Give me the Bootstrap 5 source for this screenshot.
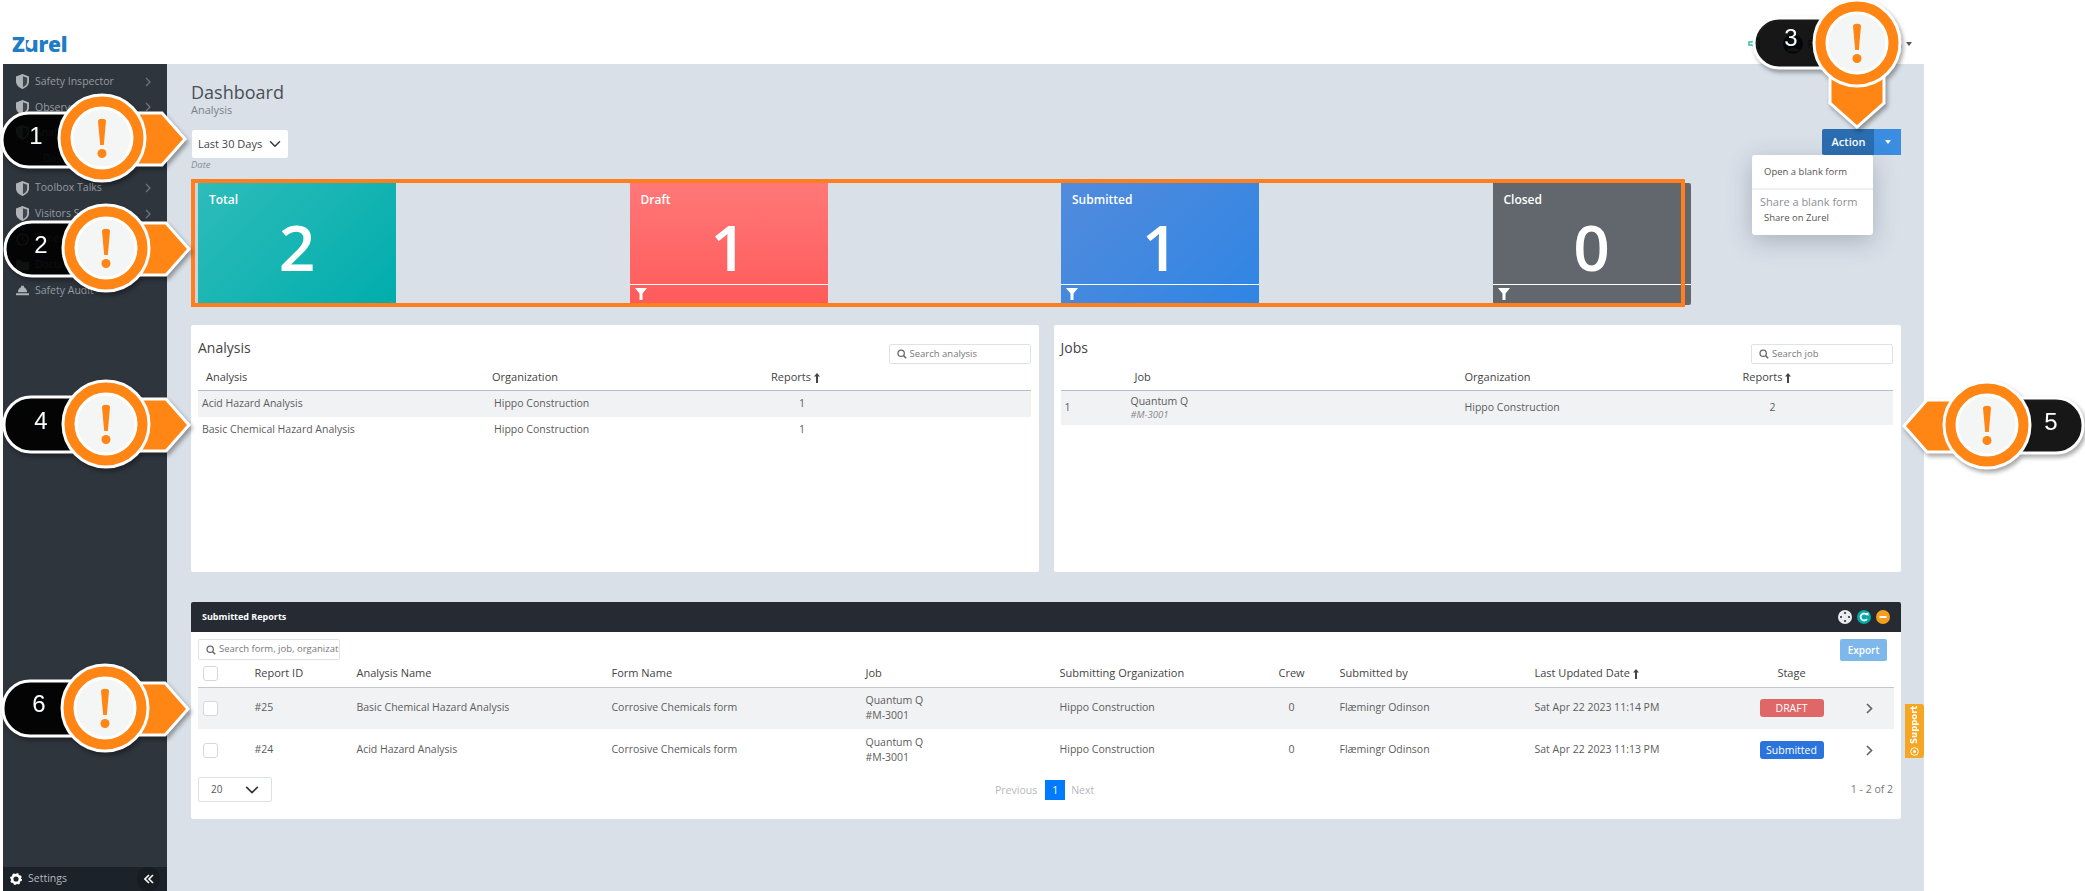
<!DOCTYPE html>
<html lang="en">
<head>
  <meta charset="UTF-8" />
  <title>Dashboard | Zurel</title>
  <link href="https://cdn.jsdelivr.net/npm/bootstrap@5.3.0/dist/css/bootstrap.min.css" rel="stylesheet"/>
  <script src="https://cdn.jsdelivr.net/npm/bootstrap@5.3.0/dist/js/bootstrap.bundle.min.js"></script>
  <style>
    html, body { height: 891px; overflow: hidden; }
    body { background: #fff; color: #555; font-family: "Open Sans", "Liberation Sans", sans-serif; font-size: 10.5px; position: relative; }
    .top-bar { height: 64px; width: 1924px; padding: 0 12px 0 12px; }
    .logo { color: #1f7dc4; font-size: 21px; font-weight: 800; letter-spacing: -.25px; line-height: 24px; margin-top: 32px; height: 24px; position: relative; }
    .logo svg { position: absolute; left: 15px; top: 7px; }
    .user-name { color: #555; font-size: 11px; margin-left: 5px; }
    .caret { border-top: 4px solid #555; border-left: 3.5px solid transparent; border-right: 3.5px solid transparent; margin-left: 4px; }
    .caret-white { border-top-color: #fff; margin: 0; }
    .avatar { margin-left: 21px; }
    .frame { margin-left: 3px; width: 1921px; height: 827px; background: #d9e0e8; position: relative; }
    .side { width: 164px; flex: none; background: #2e353d; padding-top: 5px; }
    .side .nav-link { color: #959ba1; font-size: 10.5px; height: 25.6px; padding: 0 0 0 13px; white-space: nowrap; }
    .side .nav-link svg.ic { width: 13px; height: 15px; margin-right: 6px; flex: none; }
    .side .nav-link .chev { margin-left: auto; margin-right: 16px; color: #6f757c; }
    .side .sub-link { padding-left: 40px; margin-bottom: 4px; }
    .side-foot { height: 24px; background: #1b2229; color: #b4b9be; font-size: 10.5px; padding-left: 7px; }
    .side-foot .gear { margin-right: 6px; }
    .side-foot .collapse-btn { width: 23px; height: 24px; background: #161c22; border-radius: 12px; margin-right: 7px; }
    .main { padding: 17px 23px 0 24px; min-width: 0; }
    .page-title { color: #4a4f55; font-size: 18px; font-weight: 400; line-height: 22px; margin: 0; }
    .page-sub { color: #7b8087; font-size: 11px; line-height: 14px; }
    .head-row { margin-top: 13px; }
    .range { width: 96px; height: 28px; margin-left: 1px; font-size: 11px; color: #444; padding: 0 0 0 6px; border: 0; border-radius: 2px; background-position: right 5px center; background-size: 16px 12px; }
    .hint { color: #8a8f96; font-size: 9.5px; font-style: italic; line-height: 14px; }
    .act { margin-top: -1px; }
    .act .btn { border: 0; border-radius: 2px; font-size: 11px; font-weight: 600; height: 26px; padding: 0; }
    .act .btn-main { width: 53px; background: #2a6db0; }
    .act .btn-more { width: 27px; background: #3a8de0; }
    .act .dropdown-menu { left: auto; right: 28px; top: 100%; width: 121px; min-width: 0; padding: 0; height: 80px; border: 0; border-radius: 3px; box-shadow: 0 6px 24px rgba(60, 70, 90, .3); }
    .act .dropdown-item { color: #555; font-size: 9.5px; padding: 0 12px; line-height: 16px; background: none; }
    .act .first-item { margin-top: 9px; }
    .act .dropdown-divider { border-top: 2px solid #eef0f2; margin: 8px 0 0; }
    .act .dropdown-header { color: #8a9099; font-size: 11px; padding: 4px 8px 0; line-height: 16px; }
    .kpis { margin: 11px 0 0 7px; height: 122px; position: relative; }
    .kpi-col { flex: 0 0 431.500px; }
    .kpi { width: 198px; height: 122px; border: 0; border-radius: 0; color: #fff; overflow: hidden; }
    .kpi-label { font-size: 12px; font-weight: 600; line-height: 16px; padding: 9px 0 0 11px; }
    .kpi-num { font-size: 64px; font-weight: 600; line-height: 70px; text-align: center; margin-top: 4px; height: 72px; }
    .kpi-foot { border-top: 1px solid #fff; height: 21px; padding: 3px 0 0 5px; }
    .kpi-total { background: linear-gradient(135deg, #2dbcba, #00adac); box-shadow: -3px 0 0 #cdd3d6; overflow: visible; }
    .kpi-draft { background: linear-gradient(180deg, #ff7878, #ff5a5a); }
    .kpi-sub { background: linear-gradient(135deg, #528bdc, #2f85e4); }
    .kpi-closed { background: #62676e; border-radius: 0 2px 2px 0; }
    .kpi-mark { position: absolute; left: -7px; top: -4px; width: 1494px; height: 128px; border: 4px solid #ff7f1e; pointer-events: none; }
    .panels { --bs-gutter-x: 15px; margin-top: 20px; }
    .panel { height: 247px; border: 0; border-radius: 2px; padding: 13px 8px 0 7px; }
    .panel-top { height: 26px; }
    .panel-title { color: #444; font-size: 14px; font-weight: 400; line-height: 20px; margin: 0; }
    .search { width: 142px; height: 20px; background: #fff; border: 1px solid #dfe3e7; border-radius: 2px; padding-left: 7px; }
    .search-tall { height: 21px; }
    .search svg { flex: none; }
    .search input { border: 0; outline: 0; width: 100%; min-width: 0; padding: 0 0 0 3px; font-size: 9.5px; color: #555; background: none; font-family: inherit; }
    .search input::placeholder { color: #777; opacity: 1; }
    .table.grid { table-layout: fixed; width: 100%; margin: 0; font-size: 10.5px; color: #5c5c5c; --bs-table-bg: transparent; --bs-table-color: #5c5c5c; }
    .table.grid > * > * > * { padding: 0; border: 0; vertical-align: middle; }
    .table.grid th { color: #444; font-weight: 400; font-size: 11px; }
    .table.grid thead th { height: 26px; border-bottom: 1px solid #b4bcc6; }
    .table.grid .odd > * { background: #f1f2f4; }
    .table.grid .org-cell { padding-left: 6px; }
    .grid-a col:nth-child(1) { width: 290px; }
    .grid-a col:nth-child(2) { width: 279px; }
    .grid-j col:nth-child(1) { width: 70px; }
    .grid-j col:nth-child(2) { width: 334px; }
    .grid-j col:nth-child(3) { width: 278px; }
    .grid-r col:nth-child(1) { width: 56.500px; }
    .grid-r col:nth-child(2) { width: 102px; }
    .grid-r col:nth-child(3) { width: 255px; }
    .grid-r col:nth-child(4) { width: 254px; }
    .grid-r col:nth-child(5) { width: 194px; }
    .grid-r col:nth-child(6) { width: 219px; }
    .grid-r col:nth-child(7) { width: 61px; }
    .grid-r col:nth-child(8) { width: 195px; }
    .grid-r col:nth-child(9) { width: 225px; }
    .grid-r col:nth-child(10) { width: 64px; }
    .table.grid-a tbody td { height: 26.500px; }
    .table.grid-j tbody td { height: 35px; }
    .num-a { padding-left: 32px; }
    .num-j { padding-left: 27px; }
    .job-no { color: #888; font-size: 9.5px; font-style: italic; line-height: 12px; }
    .job-line { line-height: 15px; }
    .reports { height: 217px; margin-top: 30px; border: 0; border-radius: 2px; }
    .reports .card-header { height: 30px; background: #262b33; color: #fff; font-size: 9px; font-weight: 700; border: 0; border-radius: 2px 2px 0 0; padding: 0 11px; }
    .dot { width: 14px; height: 14px; border-radius: 50%; margin-left: 5px; }
    .dot-move { background: #e9ebee; }
    .dot-refresh { background: #03a9a5; }
    .dot-min { background: #f59d1c; }
    .reports .card-body { padding: 7px 7px 0; }
    .tools { height: 21px; }
    .btn-export { width: 47px; height: 22px; margin-right: 7px; padding: 0; border: 0; border-radius: 2px; background: #7db7ec; color: #fff; font-size: 10px; font-weight: 600; }
    .table.grid-r thead th { height: 27px; border-bottom-color: #c4c8cd; }
    .table.grid-r tbody td { height: 42px; }
    .grid-r .form-check-input { width: 15px; height: 15px; margin: 0 0 0 5px; border-color: #d5d8dc; border-radius: 3px; display: block; }
    .table.grid-r .crew { text-align: center; padding-right: 35px; }
    .table.grid-r .go { padding-left: 42px; color: #666; }
    .stage { width: 64px; height: 18px; line-height: 18px; padding: 0; font-size: 10.5px; font-weight: 400; border-radius: 3px; display: block; }
    .stage-draft { background: #e06767; }
    .stage-sub { background: #2a74dc; }
    .pager-row { margin-top: 6px; }
    .per-page { width: 74px; height: 25px; font-size: 10px; color: #555; padding: 0 0 0 12px; border-color: #dde0e4; border-radius: 2px; background-position: right 10px center; background-size: 18px 14px; }
    .pager { margin: 0 0 0 723px; gap: 0; }
    .pager .page-link { border: 0; background: none; color: #b5b9be; font-size: 10.5px; padding: 0; line-height: 20px; }
    .pager .page-item.active .page-link { background: #007bff; color: #fff; width: 20px; text-align: center; margin: 0 7px 0 8px; }
    .count { color: #777; margin-left: auto; margin-right: 1px; }
    .support { position: absolute; right: 0; top: 640px; width: 19px; height: 54px; background: #f5a623; color: #fff; font-family: "DejaVu Sans", sans-serif; font-size: 8.500px; font-weight: 700; gap: 3px; border-radius: 3px 0 0 3px; writing-mode: vertical-rl; transform: rotate(180deg); }
    .overlay { position: absolute; left: 0; top: 0; z-index: 5; pointer-events: none; }
    .callout { filter: drop-shadow(2px 3px 2px rgba(0, 0, 0, .35)); }
    .callout text { fill: #fff; font-family: "Liberation Sans", sans-serif; font-size: 24px; text-anchor: middle; }
  </style>
</head>
<body>
  <svg width="0" height="0" class="position-absolute">
    <defs>
      <symbol id="shield" viewBox="0 0 14 16"><path d="M7 0 14 2.500V8c0 4-3.500 6.800-7 8-3.500-1.200-7-4-7-8V2.500Z" fill="#aeb3b7"/><path d="M7.500 2.300 12 3.900V8c0 2.900-2.200 5-4.500 6Z" fill="#3f464e"/></symbol>
      <symbol id="funnel" viewBox="0 0 12 12"><path d="M0 0h12L7.500 5.500V12h-3V5.500Z" fill="#fff"/></symbol>
      <symbol id="lens" viewBox="0 0 12 12"><circle cx="5" cy="5" r="3.800" fill="none" stroke="#666" stroke-width="1.500"/><path d="M8 8l3 3.200" stroke="#666" stroke-width="1.800"/></symbol>
      <symbol id="sortup" viewBox="0 0 6 10"><path d="M3 0 6 3.500H4V10H2V3.500H0Z" fill="#444"/></symbol>
      <symbol id="chev" viewBox="0 0 6 10"><path d="M1 1l4 4-4 4" fill="none" stroke="currentColor" stroke-width="1.300"/></symbol>
      <symbol id="chev-b" viewBox="0 0 7 11"><path d="M1 1l4.500 4.500L1 10" fill="none" stroke="currentColor" stroke-width="1.700"/></symbol>
      <symbol id="mark" viewBox="-9 -20 18 42"><path d="M-4-17C-4-20 4-20 4-17L1.800 7H-1.800Z" fill="#ff8515"/><circle cx="0" cy="15.500" r="4.500" fill="#ff8515"/></symbol>
      <g id="head">
        <circle r="43" fill="#ff8515" stroke="#fff" stroke-width="3"/>
        <circle r="30" fill="#f4f5f5" stroke="#fff" stroke-width="3"/>
        <use href="#mark" x="-9" y="-20" width="18" height="42"/>
      </g>
      <g id="beak-right"><path d="M0-25H60L83 1 60 27H0Z" fill="#ff8515" stroke="#fff" stroke-width="3"/></g>
    </defs>
  </svg>

  <header class="top-bar d-flex justify-content-between">
    <div class="logo">Z<span>u</span>rel<svg width="6" height="9" viewBox="0 0 6 9"><path d="M3 0C5 3 6 4 6 6A3 3 0 0 1 0 6C0 4 1 3 3 0Z" fill="#fff"/></svg></div>
    <div class="d-flex align-items-center mt-4">
      <svg width="14" height="14" viewBox="0 0 14 14"><path d="M1 5h3l7-4v11L4 8H1Z" fill="none" stroke="#35bdb7" stroke-width="1.500"/></svg>
      <svg class="avatar" width="20" height="20" viewBox="0 0 28 28"><circle cx="14" cy="14" r="14" fill="#1d5c5a"/><circle cx="14" cy="11" r="5" fill="#cfd6d9"/><path d="M5 24c2-6 16-6 18 0" fill="#cfd6d9"/></svg>
      <span class="user-name">Flæmingr Odinson</span>
      <span class="caret"></span>
    </div>
  </header>

  <div class="frame d-flex">
    <aside class="side d-flex flex-column">
      <nav class="nav flex-column">
        <a class="nav-link d-flex align-items-center" href="#"><svg class="ic"><use href="#shield"/></svg>Safety Inspector<svg class="chev" width="6" height="10"><use href="#chev"/></svg></a>
        <a class="nav-link d-flex align-items-center" href="#"><svg class="ic"><use href="#shield"/></svg>Observations<svg class="chev" width="6" height="10"><use href="#chev"/></svg></a>
        <a class="nav-link d-flex align-items-center" href="#"><svg class="ic"><use href="#shield"/></svg>Analysis</a>
        <a class="nav-link sub-link d-flex align-items-center" href="#">Dashboard</a>
        <a class="nav-link d-flex align-items-center" href="#"><svg class="ic"><use href="#shield"/></svg>Toolbox Talks<svg class="chev" width="6" height="10"><use href="#chev"/></svg></a>
        <a class="nav-link d-flex align-items-center" href="#"><svg class="ic"><use href="#shield"/></svg>Visitors Safety<svg class="chev" width="6" height="10"><use href="#chev"/></svg></a>
        <a class="nav-link d-flex align-items-center" href="#"><svg class="ic" viewBox="0 0 14 14"><circle cx="7" cy="7" r="6" fill="none" stroke="#aeb3b7" stroke-width="1.500"/><path d="M7 3v4l3 2" fill="none" stroke="#aeb3b7"/></svg>Timesheets</a>
        <a class="nav-link d-flex align-items-center" href="#"><svg class="ic" viewBox="0 0 14 14"><path d="M0 2h5l2 2h7v9H0Z" fill="#aeb3b7"/></svg>Documents</a>
        <a class="nav-link d-flex align-items-center" href="#"><svg class="ic" viewBox="0 0 14 14"><path d="M0 10h14v2H0ZM2 9c0-3 2-5 3.500-5.500V2h3v1.500C10 4 12 6 12 9Z" fill="#aeb3b7"/></svg>Safety Audit</a>
      </nav>
      <div class="side-foot mt-auto d-flex align-items-center">
        <svg class="gear" width="12" height="12" viewBox="0 0 14 14"><circle cx="7" cy="7" r="4.500" fill="none" stroke="#fff" stroke-width="3"/><circle cx="7" cy="7" r="6" fill="none" stroke="#fff" stroke-width="2" stroke-dasharray="2.300 2.400"/></svg>
        Settings
        <span class="collapse-btn ms-auto d-flex align-items-center justify-content-center">
          <svg width="10" height="10" viewBox="0 0 10 10"><path d="M5 1 1 5l4 4M9 1 5 5l4 4" fill="none" stroke="#fff" stroke-width="1.600"/></svg>
        </span>
      </div>
    </aside>

    <main class="main flex-grow-1">
      <h1 class="page-title">Dashboard</h1>
      <div class="page-sub">Analysis</div>

      <div class="head-row d-flex justify-content-between">
        <div>
          <select class="form-select range"><option>Last 30 Days</option></select>
          <div class="hint">Date</div>
        </div>
        <div class="btn-group act align-self-start">
          <button type="button" class="btn btn-primary btn-main">Action</button>
          <button type="button" class="btn btn-primary btn-more d-flex align-items-center justify-content-center"><span class="caret caret-white"></span></button>
          <div class="dropdown-menu show">
            <a class="dropdown-item first-item" href="#">Open a blank form</a>
            <div class="dropdown-divider"></div>
            <div class="dropdown-header">Share a blank form</div>
            <a class="dropdown-item" href="#">Share on Zurel</a>
          </div>
        </div>
      </div>

      <div class="kpis d-flex">
        <div class="kpi-col">
          <div class="card kpi kpi-total">
            <div class="kpi-label">Total</div>
            <div class="kpi-num">2</div>
          </div>
        </div>
        <div class="kpi-col">
          <div class="card kpi kpi-draft">
            <div class="kpi-label">Draft</div>
            <div class="kpi-num">1</div>
            <div class="kpi-foot d-flex"><svg width="12" height="12"><use href="#funnel"/></svg></div>
          </div>
        </div>
        <div class="kpi-col">
          <div class="card kpi kpi-sub">
            <div class="kpi-label">Submitted</div>
            <div class="kpi-num">1</div>
            <div class="kpi-foot d-flex"><svg width="12" height="12"><use href="#funnel"/></svg></div>
          </div>
        </div>
        <div>
          <div class="card kpi kpi-closed">
            <div class="kpi-label">Closed</div>
            <div class="kpi-num">0</div>
            <div class="kpi-foot d-flex"><svg width="12" height="12"><use href="#funnel"/></svg></div>
          </div>
        </div>
        <div class="kpi-mark"></div>
      </div>

      <div class="row panels">
        <div class="col-6">
          <div class="card panel">
            <div class="panel-top d-flex justify-content-between">
              <h2 class="panel-title">Analysis</h2>
              <div class="search d-flex align-items-center align-self-end"><svg width="10" height="10"><use href="#lens"/></svg><input type="text" placeholder="Search analysis"></div>
            </div>
            <table class="table grid grid-a">
              <colgroup><col><col><col></colgroup>
              <thead><tr><th class="ps-2">Analysis</th><th class="ps-1">Organization</th><th class="ps-1">Reports <svg width="6" height="10"><use href="#sortup"/></svg></th></tr></thead>
              <tbody>
                <tr class="odd"><td class="ps-1">Acid Hazard Analysis</td><td class="org-cell">Hippo Construction</td><td><span class="d-block num-a">1</span></td></tr>
                <tr><td class="ps-1">Basic Chemical Hazard Analysis</td><td class="org-cell">Hippo Construction</td><td><span class="d-block num-a">1</span></td></tr>
              </tbody>
            </table>
          </div>
        </div>
        <div class="col-6">
          <div class="card panel">
            <div class="panel-top d-flex justify-content-between">
              <h2 class="panel-title">Jobs</h2>
              <div class="search d-flex align-items-center align-self-end"><svg width="10" height="10"><use href="#lens"/></svg><input type="text" placeholder="Search job"></div>
            </div>
            <table class="table grid grid-j">
              <colgroup><col><col><col><col></colgroup>
              <thead><tr><th></th><th class="ps-1">Job</th><th>Organization</th><th>Reports <svg width="6" height="10"><use href="#sortup"/></svg></th></tr></thead>
              <tbody>
                <tr class="odd"><td class="ps-1">1</td><td><div class="job-line">Quantum Q</div><div class="job-no">#M-3001</div></td><td>Hippo Construction</td><td><span class="d-block num-j">2</span></td></tr>
              </tbody>
            </table>
          </div>
        </div>
      </div>

      <div class="card reports">
        <div class="card-header d-flex align-items-center justify-content-between">
          <span>Submitted Reports</span>
          <span class="d-flex">
            <span class="dot dot-move d-flex"><svg width="14" height="14" viewBox="0 0 14 14"><path d="M7 2v10M2 7h10" stroke="#555" stroke-width="2" stroke-dasharray="2 6" fill="none"/></svg></span>
            <span class="dot dot-refresh d-flex"><svg width="14" height="14" viewBox="0 0 14 14"><path d="M10 5A3.500 3.500 0 1 0 10 9" fill="none" stroke="#fff" stroke-width="1.800"/><path d="M8 3.500l3.500-1V6Z" fill="#fff"/></svg></span>
            <span class="dot dot-min d-flex"><svg width="14" height="14" viewBox="0 0 14 14"><path d="M3.500 7h7" stroke="#fff" stroke-width="2"/></svg></span>
          </span>
        </div>
        <div class="card-body">
          <div class="tools d-flex justify-content-between">
            <div class="search search-tall d-flex align-items-center"><svg width="10" height="10"><use href="#lens"/></svg><input type="text" placeholder="Search form, job, organization"></div>
            <button type="button" class="btn btn-export">Export</button>
          </div>
          <table class="table grid grid-r">
            <colgroup><col><col><col><col><col><col><col><col><col><col><col></colgroup>
            <thead><tr>
              <th><input class="form-check-input" type="checkbox"></th><th>Report ID</th><th>Analysis Name</th><th>Form Name</th><th>Job</th><th>Submitting Organization</th><th>Crew</th><th>Submitted by</th><th>Last Updated Date <svg width="6" height="10"><use href="#sortup"/></svg></th><th class="text-center">Stage</th><th></th>
            </tr></thead>
            <tbody>
              <tr class="odd">
                <td><input class="form-check-input" type="checkbox"></td><td>#25</td><td>Basic Chemical Hazard Analysis</td><td>Corrosive Chemicals form</td><td><div class="job-line">Quantum Q</div><div class="job-line">#M-3001</div></td><td>Hippo Construction</td><td class="crew">0</td><td>Flæmingr Odinson</td><td>Sat Apr 22 2023 11:14 PM</td><td><span class="badge stage stage-draft">DRAFT</span></td><td class="go"><svg width="7" height="11"><use href="#chev-b"/></svg></td>
              </tr>
              <tr>
                <td><input class="form-check-input" type="checkbox"></td><td>#24</td><td>Acid Hazard Analysis</td><td>Corrosive Chemicals form</td><td><div class="job-line">Quantum Q</div><div class="job-line">#M-3001</div></td><td>Hippo Construction</td><td class="crew">0</td><td>Flæmingr Odinson</td><td>Sat Apr 22 2023 11:13 PM</td><td><span class="badge stage stage-sub">Submitted</span></td><td class="go"><svg width="7" height="11"><use href="#chev-b"/></svg></td>
              </tr>
            </tbody>
          </table>
          <div class="d-flex align-items-center pager-row">
            <select class="form-select per-page"><option>20</option></select>
            <ul class="pagination pager">
              <li class="page-item disabled"><a class="page-link" href="#">Previous</a></li>
              <li class="page-item active"><a class="page-link" href="#">1</a></li>
              <li class="page-item disabled"><a class="page-link" href="#">Next</a></li>
            </ul>
            <span class="count">1 - 2 of 2</span>
          </div>
        </div>
      </div>

      <div class="support d-flex align-items-center justify-content-center">
        <svg width="9" height="9" viewBox="0 0 9 9"><circle cx="4.500" cy="4.500" r="3.800" fill="none" stroke="#fff"/><circle cx="4.500" cy="4.500" r="1.500" fill="#fff"/></svg>
        Support
      </div>
    </main>
  </div>

  <svg class="overlay" width="2085" height="891" viewBox="0 0 2085 891">
    <g class="callout" transform="translate(102 138)">
      <rect x="-100" y="-25" width="110" height="54" rx="27" fill="#000" fill-opacity=".88" stroke="#fff" stroke-width="3"/>
      <text x="-66" y="6">1</text>
      <use href="#beak-right"/><use href="#head"/>
    </g>
    <g class="callout" transform="translate(106 248)">
      <rect x="-101" y="-26" width="110" height="54" rx="27" fill="#000" fill-opacity=".88" stroke="#fff" stroke-width="3"/>
      <text x="-65" y="5">2</text>
      <use href="#beak-right"/><use href="#head"/>
    </g>
    <g class="callout" transform="translate(1857 43)">
      <rect x="-103" y="-25" width="120" height="50" rx="25" fill="#000" fill-opacity=".87" stroke="#fff" stroke-width="3"/>
      <text x="-66" y="3">3</text>
      <path d="M-27 0H27V60L0 84-27 60Z" fill="#ff8515" stroke="#fff" stroke-width="3"/>
      <use href="#head"/>
    </g>
    <g class="callout" transform="translate(106 424)">
      <rect x="-102" y="-27" width="110" height="55" rx="27" fill="#000" fill-opacity=".88" stroke="#fff" stroke-width="3"/>
      <text x="-65" y="5">4</text>
      <use href="#beak-right"/><use href="#head"/>
    </g>
    <g class="callout" transform="translate(1987 425)">
      <rect x="-10" y="-27" width="106" height="55" rx="27" fill="#000" fill-opacity=".87" stroke="#fff" stroke-width="3"/>
      <text x="64" y="5">5</text>
      <use href="#beak-right" transform="scale(-1 1)"/><use href="#head"/>
    </g>
    <g class="callout" transform="translate(105 708)">
      <rect x="-102" y="-27" width="110" height="55" rx="27" fill="#000" fill-opacity=".88" stroke="#fff" stroke-width="3"/>
      <text x="-66" y="4">6</text>
      <use href="#beak-right"/><use href="#head"/>
    </g>
  </svg>
</body>
</html>
